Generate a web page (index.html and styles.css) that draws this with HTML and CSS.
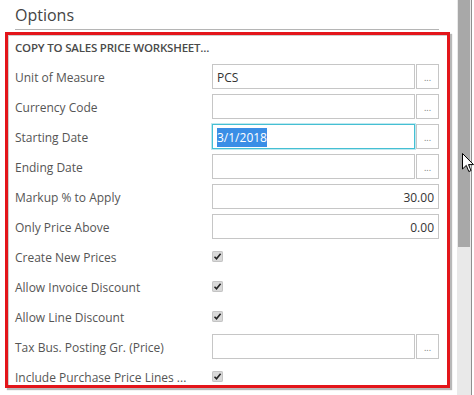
FILE: index.html
```html
<!DOCTYPE html>
<html>
<head>
<meta charset="utf-8">
<link rel="stylesheet" href="styles.css">
</head>
<body>
<div class="page">
  <div class="main">
    <div class="title">Options</div>
    <div class="panel">
      <div class="header">Copy to Sales Price Worksheet...</div>
      <div class="row"><div class="label">Unit of Measure</div><div class="field"><div class="input">PCS</div><div class="btn">...</div></div></div>
      <div class="row"><div class="label">Currency Code</div><div class="field"><div class="input"></div><div class="btn">...</div></div></div>
      <div class="row"><div class="label">Starting Date</div><div class="field"><div class="input focus"><span class="sel">3/1/2018</span></div><div class="btn">...</div></div></div>
      <div class="row"><div class="label">Ending Date</div><div class="field"><div class="input"></div><div class="btn">...</div></div></div>
      <div class="row"><div class="label">Markup % to Apply</div><div class="field"><div class="input num">30.00</div></div></div>
      <div class="row"><div class="label">Only Price Above</div><div class="field"><div class="input num">0.00</div></div></div>
      <div class="row"><div class="label">Create New Prices</div><div class="field"><div class="check"><svg viewBox="0 0 11 11" width="11" height="11"><path d="M2.5 5.8 L4.5 7.8 L8.6 2.8" fill="none" stroke="#222" stroke-width="1.6"/></svg></div></div></div>
      <div class="row"><div class="label">Allow Invoice Discount</div><div class="field"><div class="check"><svg viewBox="0 0 11 11" width="11" height="11"><path d="M2.5 5.8 L4.5 7.8 L8.6 2.8" fill="none" stroke="#222" stroke-width="1.6"/></svg></div></div></div>
      <div class="row"><div class="label">Allow Line Discount</div><div class="field"><div class="check"><svg viewBox="0 0 11 11" width="11" height="11"><path d="M2.5 5.8 L4.5 7.8 L8.6 2.8" fill="none" stroke="#222" stroke-width="1.6"/></svg></div></div></div>
      <div class="row"><div class="label">Tax Bus. Posting Gr. (Price)</div><div class="field"><div class="input"></div><div class="btn">...</div></div></div>
      <div class="row"><div class="label">Include Purchase Price Lines ...</div><div class="field"><div class="check"><svg viewBox="0 0 11 11" width="11" height="11"><path d="M2.5 5.8 L4.5 7.8 L8.6 2.8" fill="none" stroke="#222" stroke-width="1.6"/></svg></div></div></div>
    </div>
  </div>
  <div class="scroll">
    <div class="track"><div class="thumb"></div></div>
    <div class="edge"></div>
  </div>
</div>
<svg class="cursor" width="12" height="20" viewBox="0 0 12 20"><path d="M0.5 0.5 L0.5 16 L4.3 12.4 L6.8 18.5 L9 17.6 L6.5 11.6 L11.5 11.6 Z" fill="#fff" stroke="#000" stroke-width="1"/></svg>
</body>
</html>
```
FILE: styles.css
```css
html, body {
  margin: 0;
  padding: 0;
  background: #fff;
  overflow: hidden;
}
body {
  font-family: "Open Sans", "Noto Sans", sans-serif;
  width: 474px;
  height: 395px;
  position: relative;
}
.page {
  display: flex;
  height: 395px;
}
.main {
  width: 456px;
}
.title {
  margin: 0 17px 0 15px;
  padding-top: 1px;
  height: 28px;
  line-height: 28px;
  font-size: 16px;
  color: #444;
  border-bottom: 1px solid #b5b5b5;
}
.panel {
  margin: 2px 0 0 5px;
  width: 439px;
  height: 350px;
  border: 3px solid #e3151a;
  overflow: hidden;
  box-shadow: 2px 2px 1px rgba(0,0,0,0.28), inset 1px 1px 0 #cfcfcf;
}
.header {
  height: 26px;
  line-height: 26px;
  padding-left: 7px;
  font-size: 11.5px;
  font-weight: 600;
  text-transform: uppercase;
  letter-spacing: -0.2px;
  color: #4a4a4a;
}
.row {
  display: grid;
  grid-template-columns: 197px 227px;
  align-items: center;
  height: 30px;
  padding-left: 7px;
}
.label {
  font-size: 12px;
  color: #555;
  padding-top: 2px;
  white-space: nowrap;
}
.field {
  display: flex;
  align-items: center;
  height: 25px;
}
.input {
  flex: 1;
  height: 25px;
  box-sizing: border-box;
  border: 1px solid #c6c6c6;
  background: #fff;
  font-size: 12px;
  color: #333;
  padding: 3px 4px 0 4px;
  line-height: 20px;
  white-space: nowrap;
}
.input.num {
  text-align: right;
  padding-right: 4px;
}
.input.focus {
  border-color: #45bfd3;
  box-shadow: 0 0 0 1px rgba(69,191,211,0.35);
}
.sel {
  background: #3a8ee6;
  color: #fff;
  padding: 1px 0;
}
.btn {
  width: 23px;
  height: 25px;
  box-sizing: border-box;
  margin-left: 1px;
  border: 1px solid #c6c6c6;
  font-size: 9px;
  color: #777;
  text-align: center;
  line-height: 22px;
  padding-top: 2px;
}
.check {
  width: 11px;
  height: 11px;
  background: #d9d9d9;
  border-radius: 2px;
  box-shadow: inset 0 0 0 1px #c4c4c4;
  display: flex;
}
.scroll {
  width: 18px;
  display: flex;
}
.track {
  width: 12px;
  margin-left: 1px;
  padding: 0 1px;
  background: #e9e9e9;
}
.thumb {
  height: 247px;
  background: #a8a8a8;
}
.edge {
  width: 1px;
  background: #8f8f8f;
}
.cursor {
  position: absolute;
  left: 462px;
  top: 153px;
}
```
